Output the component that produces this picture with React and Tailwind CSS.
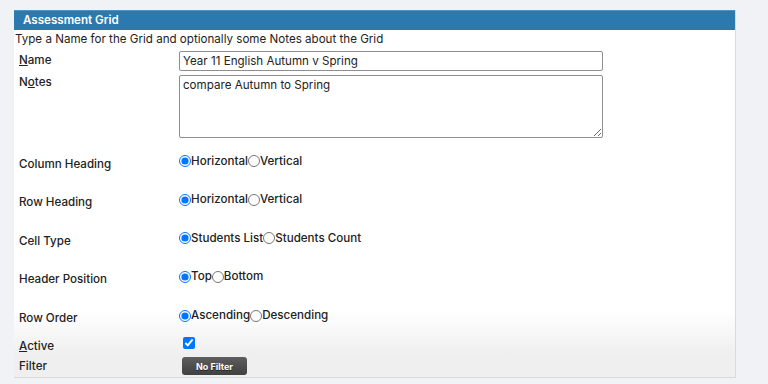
import { useState } from "react";

const font = { fontFamily: "Inter, 'Noto Sans', sans-serif" };

function RadioRow({ label, name, options }) {
  const [value, setValue] = useState(options[0]);
  return (
    <div className="flex h-[38.6px] items-center">
      <span className="mt-[6px] w-[160px] font-medium">{label}</span>
      <div className="flex items-center">
        {options.map((o) => (
          <label key={o} className="flex items-center font-medium">
            <input
              type="radio"
              name={name}
              checked={value === o}
              onChange={() => setValue(o)}
              className="m-0 h-[12px] w-[12px]"
            />
            <span>{o}</span>
          </label>
        ))}
      </div>
    </div>
  );
}

export default function App() {
  const [active, setActive] = useState(true);
  return (
    <div className="min-h-[384px] w-[768px] bg-[#f1f2f6] pt-[10px] text-[11.6px] text-[#222]" style={font}>
      <div className="ml-[14px] w-[722px] border-r border-b border-[#dadada] bg-[linear-gradient(to_bottom,#ffffff_0,#ffffff_300px,#efefef_345px)]">
        <div className="flex h-[20px] items-center border-t border-[#4d92c2] bg-[#2a7ab0] px-[9px] font-semibold text-white">
          Assessment Grid
        </div>
        <div className="flex h-[20px] items-center pl-[1px]">
          Type a Name for the Grid and optionally some Notes about the Grid
        </div>
        <div className="pl-[5px]">
          <div className="flex h-[22px] items-center">
            <span className="w-[160px] font-medium">
              <span className="underline">N</span>ame
            </span>
            <input
              defaultValue="Year 11 English Autumn v Spring"
              className="h-[20px] w-[424px] rounded-[2px] border border-[#8e8e8e] px-[3px] text-[11.6px] outline-none"
              style={font}
            />
          </div>
          <div className="mt-[3px] flex">
            <span className="-mt-[1px] w-[160px] font-medium">
              N<span className="underline">o</span>tes
            </span>
            <textarea
              defaultValue="compare Autumn to Spring"
              className="block h-[63px] w-[424px] rounded-[2px] border border-[#8e8e8e] px-[3px] py-[1px] text-[11.6px] outline-none"
              style={font}
            />
          </div>
          <div className="h-[4px]" />
          <RadioRow label="Column Heading" name="col" options={["Horizontal", "Vertical"]} />
          <RadioRow label="Row Heading" name="row" options={["Horizontal", "Vertical"]} />
          <RadioRow label="Cell Type" name="cell" options={["Students List", "Students Count"]} />
          <RadioRow label="Header Position" name="hdr" options={["Top", "Bottom"]} />
          <RadioRow label="Row Order" name="order" options={["Ascending", "Descending"]} />
          <div className="flex h-[21px] items-center">
            <span className="mt-[2px] w-[160px] font-medium">
              <span className="underline">A</span>ctive
            </span>
            <input
              type="checkbox"
              checked={active}
              onChange={(e) => setActive(e.target.checked)}
              className="m-0 ml-[4px] mb-[5px] h-[12px] w-[12px]"
            />
          </div>
          <div className="flex h-[21px] items-center">
            <span className="w-[160px] font-medium">Filter</span>
            <button className="ml-[3px] flex h-[18px] w-[65px] items-center justify-center rounded-[3px] bg-gradient-to-b from-[#5e5e5e] to-[#404040] text-[9px] font-bold text-white [text-shadow:0_1px_0_#222]">
              No Filter
            </button>
          </div>
        </div>
      </div>
    </div>
  );
}
